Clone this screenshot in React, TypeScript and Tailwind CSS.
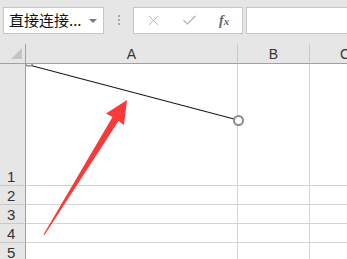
import { X, Check } from 'lucide-react';

const cols = ['', 'A', 'B', 'C'];
const rows = [
  { label: '1', h: 'h-[122px]' },
  { label: '2', h: 'h-[19px]' },
  { label: '3', h: 'h-[19px]' },
  { label: '4', h: 'h-[19px]' },
  { label: '5', h: 'h-[19px]' },
];

function Toolbar() {
  return (
    <div className="flex h-[44px] items-start bg-[#e6e6e6] pt-[7px] pl-[3px]">
      {/* Name box */}
      <div className="flex h-[27px] w-[101px] items-center justify-between border border-[#c6c6c6] bg-white pr-[6px] pl-[5px]">
        <span className="text-[15px] text-[#111] [font-family:'Noto_Sans_CJK_SC',sans-serif]">直接连接...</span>
        <span className="h-0 w-0 border-x-[4px] border-t-[4px] border-x-transparent border-t-[#777]" />
      </div>

      {/* Grip */}
      <div className="ml-[14px] flex flex-col gap-[2px] pt-[8px]">
        <span className="h-[2px] w-[2px] bg-[#a8a8a8]" />
        <span className="h-[2px] w-[2px] bg-[#a8a8a8]" />
        <span className="h-[2px] w-[2px] bg-[#a8a8a8]" />
      </div>

      {/* Formula buttons */}
      <div className="ml-[13px] flex h-[27px] w-[110px] items-center border border-[#c6c6c6] bg-white">
        <X className="ml-[11px] h-[17px] w-[17px] text-[#b8b8b8]" strokeWidth={1.4} />
        <Check className="ml-[19px] h-[17px] w-[17px] text-[#b8b8b8]" strokeWidth={2} />
        <span className="ml-[21px] text-[14px] font-bold text-[#666] italic [font-family:'Liberation_Serif',serif]">
          f<span className="text-[11px]">x</span>
        </span>
      </div>

      {/* Formula input */}
      <div className="ml-[3px] h-[27px] flex-1 border border-r-0 border-[#c6c6c6] bg-white" />
    </div>
  );
}

function Sheet() {
  return (
    <div className="grid grid-cols-[26px_212px_72px_1fr] [font-family:'Liberation_Sans',sans-serif]">
      {cols.map((c, i) => (
        <div
          key={c || 'corner'}
          className={`relative flex h-[20px] items-center justify-center border-b border-[#a0a0a0] bg-[#e6e6e6] text-[14px] text-[#333] ${
            i === 0 ? 'border-r border-r-[#a0a0a0]' : 'border-r border-r-[#c8c8c8]'
          }`}
        >
          {i === 0 ? (
            <svg className="absolute right-[3px] bottom-[4px]" width="11" height="11" viewBox="0 0 11 11">
              <polygon points="11,0 11,11 0,11" fill="#c4c4c4" />
            </svg>
          ) : (
            <span className={i === 3 ? 'ml-[30px] pt-[2px]' : 'pt-[2px]'}>{c}</span>
          )}
        </div>
      ))}
      {rows.map((r) => (
        <Row key={r.label} label={r.label} h={r.h} />
      ))}
    </div>
  );
}

function Row({ label, h }: { label: string; h: string }) {
  return (
    <>
      <div
        className={`flex ${h} items-end border-r border-b border-r-[#a0a0a0] border-b-[#c8c8c8] bg-[#e6e6e6] pb-[1px] pl-[7px] text-[15px] leading-none text-[#333]`}
      >
        {label}
      </div>
      <div className={`${h} border-r border-b border-[#d4d4d4] bg-white`} />
      <div className={`${h} border-r border-b border-[#d4d4d4] bg-white`} />
      <div className={`${h} border-b border-[#d4d4d4] bg-white`} />
    </>
  );
}

function Overlay() {
  return (
    <svg className="pointer-events-none absolute inset-0" width="347" height="259" viewBox="0 0 347 259">
      <defs>
        <clipPath id="cells">
          <rect x="26" y="64" width="321" height="195" />
        </clipPath>
      </defs>
      {/* connector line */}
      <line x1="31" y1="65.5" x2="234" y2="119" stroke="#1a1a1a" strokeWidth="1.2" />
      <circle cx="29" cy="62" r="4" fill="none" stroke="#8c8c8c" strokeWidth="1.6" clipPath="url(#cells)" />
      <circle cx="238.5" cy="120.5" r="4.5" fill="white" stroke="#8c8c8c" strokeWidth="2" />
      {/* red arrow */}
      <polygon points="127,100 124,125 118.5,121 44.5,235 43.5,234.5 112.5,117 106,113.5" fill="#fa3a3a" />
    </svg>
  );
}

export default function App() {
  return (
    <div className="relative h-[259px] w-[347px] overflow-hidden bg-white">
      <Toolbar />
      <Sheet />
      <Overlay />
    </div>
  );
}
